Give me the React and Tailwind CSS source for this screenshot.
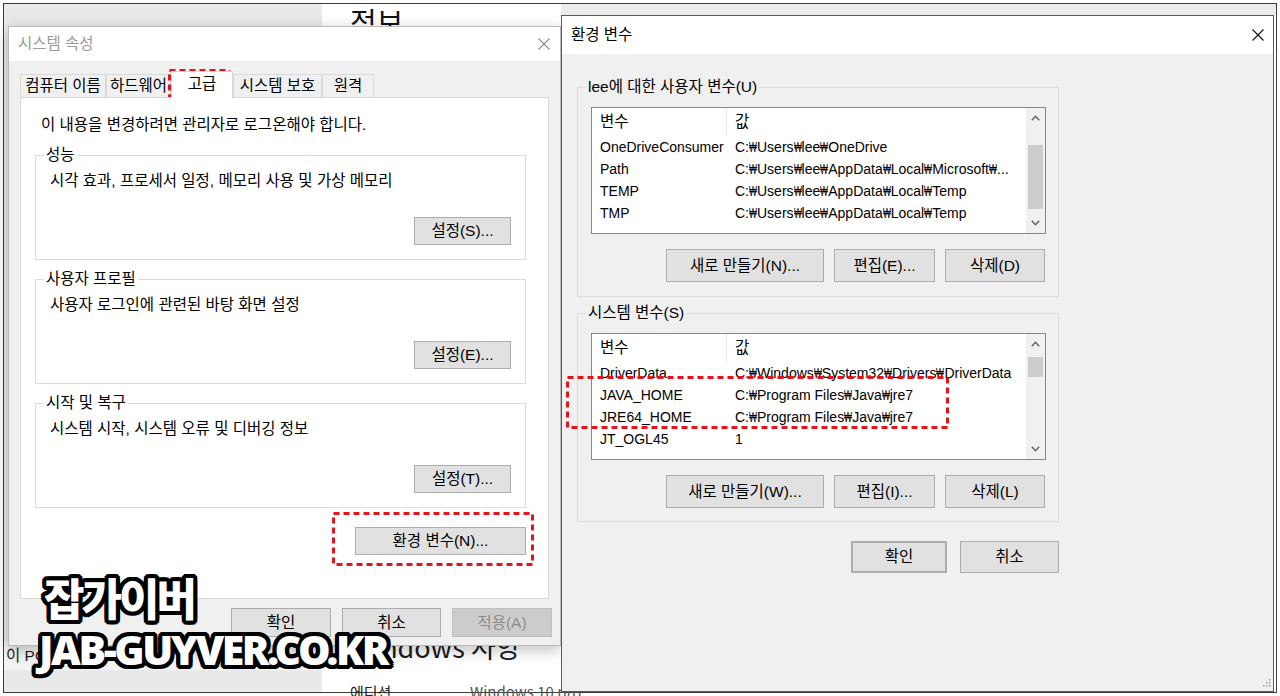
import React from "react";

const OUTLINE =
  "[text-shadow:4px_0_0_#000,-4px_0_0_#000,0_4px_0_#000,0_-4px_0_#000,3px_3px_0_#000,-3px_3px_0_#000,3px_-3px_0_#000,-3px_-3px_0_#000,4px_2px_0_#000,4px_-2px_0_#000,-4px_2px_0_#000,-4px_-2px_0_#000,2px_4px_0_#000,-2px_4px_0_#000,2px_-4px_0_#000,-2px_-4px_0_#000]";

function Btn({ children, className = "", disabled = false }) {
  return (
    <div
      className={
        "flex shrink-0 items-center justify-center border text-[15.5px] leading-none " +
        (disabled
          ? "border-[#bfbfbf] bg-[#cccccc] text-[#8c8c8c] "
          : "border-[#adadad] bg-[#e1e1e1] text-black ") +
        className
      }
    >
      {children}
    </div>
  );
}

function CloseX({ color }) {
  return (
    <svg width="12" height="12" viewBox="0 0 12 12" className="block">
      <path d="M0.5 0.5 L11.5 11.5 M11.5 0.5 L0.5 11.5" stroke={color} strokeWidth="1.1" fill="none" />
    </svg>
  );
}

function Chevron({ up }) {
  return (
    <svg width="9" height="6" viewBox="0 0 9 6" className="block">
      <path
        d={up ? "M0.8 5.2 L4.5 1.3 L8.2 5.2" : "M0.8 0.8 L4.5 4.7 L8.2 0.8"}
        stroke="#606060"
        strokeWidth="1.4"
        fill="none"
      />
    </svg>
  );
}

function Group({ label, className = "", labelBg, children }) {
  return (
    <div className={"relative flex flex-col border border-[#dcdcdc] " + className}>
      <span className={"absolute left-[8px] top-[-10px] px-[2px] text-[15.5px] leading-[18px] text-black " + labelBg}>
        {label}
      </span>
      {children}
    </div>
  );
}

function Val({ text }) {
  const parts = text.split("₩");
  return (
    <>
      {parts.map((p, i) => (
        <React.Fragment key={i}>
          {i > 0 && <span className="inline-block w-[8px] origin-left scale-x-[0.6]">₩</span>}
          {p}
        </React.Fragment>
      ))}
    </>
  );
}

function ListView({ rows, thumbClass }) {
  return (
    <div className="flex h-[127px] w-[455px] border border-[#828790] bg-white">
      <div className="min-w-0 flex-1 overflow-hidden text-black">
        <div className="flex h-[28px] text-[15.5px]">
          <div className="flex w-[135px] shrink-0 items-center border-r border-[#e5e5e5] pl-[8px]">변수</div>
          <div className="flex items-center pl-[8px]">값</div>
        </div>
        {rows.map(([n, v]) => (
          <div key={n} className="flex h-[22px] items-center whitespace-nowrap text-[14px]">
            <div className="w-[135px] shrink-0 pl-[8px]">{n}</div>
            <div className="pl-[8px]">
              <Val text={v} />
            </div>
          </div>
        ))}
      </div>
      <div className="flex w-[19px] shrink-0 flex-col bg-[#f0f0f0]">
        <div className="flex h-[20px] items-center justify-center">
          <Chevron up />
        </div>
        <div className="flex-1 px-[2px]">
          <div className={"bg-[#cdcdcd] " + thumbClass} />
        </div>
        <div className="flex h-[20px] items-center justify-center">
          <Chevron />
        </div>
      </div>
    </div>
  );
}

function DashBox({ className }) {
  return (
    <svg className={"pointer-events-none absolute " + className} preserveAspectRatio="none">
      <rect
        x="1.5"
        y="1.5"
        width="calc(100% - 3px)"
        height="calc(100% - 3px)"
        fill="none"
        stroke="#e3141b"
        strokeWidth="3"
        strokeDasharray="6 4"
      />
    </svg>
  );
}

export default function App() {
  const userRows = [
    ["OneDriveConsumer", "C:₩Users₩lee₩OneDrive"],
    ["Path", "C:₩Users₩lee₩AppData₩Local₩Microsoft₩..."],
    ["TEMP", "C:₩Users₩lee₩AppData₩Local₩Temp"],
    ["TMP", "C:₩Users₩lee₩AppData₩Local₩Temp"],
  ];
  const sysRows = [
    ["DriverData", "C:₩Windows₩System32₩Drivers₩DriverData"],
    ["JAVA_HOME", "C:₩Program Files₩Java₩jre7"],
    ["JRE64_HOME", "C:₩Program Files₩Java₩jre7"],
    ["JT_OGL45", "1"],
  ];
  const tabs = [
    ["컴퓨터 이름", "w-[86px]"],
    ["하드웨어", "w-[65px]"],
  ];
  const tabs2 = [
    ["시스템 보호", "w-[89px]"],
    ["원격", "w-[52px]"],
  ];

  return (
    <div className="relative h-[696px] w-[1280px] overflow-hidden bg-white text-black [font-family:'Liberation_Sans','Noto_Sans_CJK_KR',sans-serif]">
      {/* background: settings window inside outer frame */}
      <div className="ml-[3px] mt-[3px] flex h-[690px] w-[1274px] border border-[#3c3c3c]">
        <div className="flex w-[318px] shrink-0 flex-col bg-[#e9e9e9]">
          <div className="mt-[638px] flex h-[28px] items-center bg-[#f3f3f3] pl-[2px] text-[15.5px] text-[#222]">이 PC</div>
        </div>
        <div className="flex flex-1 flex-col pl-[28px] [font-family:'Noto_Sans_CJK_KR',sans-serif]">
          <div className="mt-[3px] text-[29px] leading-none text-[#111]">정보</div>
          <div className="mt-[597px] text-[27px] leading-none text-[#1a1a1a]">Windows 사양</div>
          <div className="mt-[24px] flex text-[15px] leading-none text-[#222]">
            <span className="w-[120px]">에디션</span>
            <span className="text-[#555]">Windows 10 pro</span>
          </div>
        </div>
      </div>

      {/* system properties dialog */}
      <div className="absolute left-[8px] top-[26px] flex h-[620px] w-[553px] flex-col border border-[#b9b9b9] bg-[#f0f0f0] shadow-[0_4px_14px_rgba(0,0,0,0.25)]">
        <div className="flex h-[34px] shrink-0 items-center justify-between bg-white pl-[9px] pr-[10px]">
          <span className="text-[15.5px] text-[#9a9a9a]">시스템 속성</span>
          <CloseX color="#8a8a8a" />
        </div>
        <div className="flex flex-1 flex-col px-[11px] pt-[10px]">
          <div className="flex h-[26px] items-end">
            {tabs.map(([t, w]) => (
              <div key={t} className={"flex h-[23px] items-center justify-center border border-b-0 border-[#d9d9d9] bg-[#f0f0f0] text-[15.5px] " + w}>
                {t}
              </div>
            ))}
            <div className="relative z-10 mb-[-1px] flex h-[27px] w-[62px] items-center justify-center border border-b-0 border-[#d9d9d9] bg-white pb-[2px] text-[15.5px]">
              고급
            </div>
            {tabs2.map(([t, w]) => (
              <div key={t} className={"flex h-[23px] items-center justify-center border border-b-0 border-[#d9d9d9] bg-[#f0f0f0] text-[15.5px] " + w}>
                {t}
              </div>
            ))}
          </div>
          <div className="flex h-[502px] flex-col border border-[#d9d9d9] bg-white">
            <div className="h-[57px] pl-[20px] pt-[18px] text-[15.5px] leading-[18px]">이 내용을 변경하려면 관리자로 로그온해야 합니다.</div>
            <Group label="성능" labelBg="bg-white" className="ml-[14px] mr-[22px] h-[105px]">
              <div className="pl-[14px] pt-[16px] text-[15.5px] leading-[18px]">시각 효과, 프로세서 일정, 메모리 사용 및 가상 메모리</div>
              <Btn className="mb-[14px] mr-[14px] mt-auto h-[28px] w-[97px] self-end">설정(S)...</Btn>
            </Group>
            <Group label="사용자 프로필" labelBg="bg-white" className="ml-[14px] mr-[22px] mt-[19px] h-[105px]">
              <div className="pl-[14px] pt-[16px] text-[15.5px] leading-[18px]">사용자 로그인에 관련된 바탕 화면 설정</div>
              <Btn className="mb-[14px] mr-[14px] mt-auto h-[28px] w-[97px] self-end">설정(E)...</Btn>
            </Group>
            <Group label="시작 및 복구" labelBg="bg-white" className="ml-[14px] mr-[22px] mt-[19px] h-[105px]">
              <div className="pl-[14px] pt-[16px] text-[15.5px] leading-[18px]">시스템 시작, 시스템 오류 및 디버깅 정보</div>
              <Btn className="mb-[14px] mr-[14px] mt-auto h-[28px] w-[97px] self-end">설정(T)...</Btn>
            </Group>
            <Btn className="mr-[22px] mt-[19px] h-[28px] w-[171px] self-end">환경 변수(N)...</Btn>
          </div>
          <div className="-mr-[3px] mt-[9px] flex justify-end gap-[11px]">
            <Btn className="h-[29px] w-[100px]">확인</Btn>
            <Btn className="h-[29px] w-[99px]">취소</Btn>
            <Btn disabled className="h-[29px] w-[100px]">적용(A)</Btn>
          </div>
        </div>
      </div>

      {/* band above env dialog */}
      <div className="absolute left-[561px] top-[4px] h-[11px] w-[715px] bg-[#ebebeb]" />

      {/* environment variables dialog */}
      <div className="absolute left-[561px] top-[15px] flex h-[677px] w-[713px] flex-col border border-[#5a5a5a] bg-[#f0f0f0]">
        <div className="flex h-[38px] shrink-0 items-center justify-between bg-white pl-[9px] pr-[9px]">
          <span className="text-[15.5px]">환경 변수</span>
          <CloseX color="#111" />
        </div>
        <div className="relative flex flex-1 flex-col pl-[15px] pt-[33px]">
          <Group label="lee에 대한 사용자 변수(U)" labelBg="bg-[#f0f0f0]" className="h-[210px] w-[482px] px-[13px] pt-[19px]">
            <ListView rows={userRows} thumbClass="mt-[17px] h-[64px]" />
            <div className="mt-[15px] flex justify-end gap-[10px]">
              <Btn className="h-[33px] w-[158px]">새로 만들기(N)...</Btn>
              <Btn className="h-[33px] w-[101px]">편집(E)...</Btn>
              <Btn className="h-[33px] w-[100px]">삭제(D)</Btn>
            </div>
          </Group>
          <Group label="시스템 변수(S)" labelBg="bg-[#f0f0f0]" className="mt-[16px] h-[209px] w-[482px] px-[13px] pt-[19px]">
            <ListView rows={sysRows} thumbClass="mt-[3px] h-[20px]" />
            <div className="mt-[15px] flex justify-end gap-[10px]">
              <Btn className="h-[33px] w-[158px]">새로 만들기(W)...</Btn>
              <Btn className="h-[33px] w-[101px]">편집(I)...</Btn>
              <Btn className="h-[33px] w-[100px]">삭제(L)</Btn>
            </div>
          </Group>
          <div className="mt-[19px] flex w-[482px] justify-end gap-[13px]">
            <Btn className="h-[32px] w-[96px] border-2 border-[#0078d7]">확인</Btn>
            <Btn className="h-[32px] w-[99px]">취소</Btn>
          </div>
          <svg width="10" height="10" viewBox="0 0 10 10" className="absolute bottom-[2px] right-[2px]">
            <g fill="#9a9a9a">
              <rect x="8" y="0" width="1.5" height="1.5" />
              <rect x="5" y="3" width="1.5" height="1.5" />
              <rect x="8" y="3" width="1.5" height="1.5" />
              <rect x="2" y="6" width="1.5" height="1.5" />
              <rect x="5" y="6" width="1.5" height="1.5" />
              <rect x="8" y="6" width="1.5" height="1.5" />
            </g>
          </svg>
        </div>
      </div>

      {/* annotations */}
      <DashBox className="left-[168px] top-[69px] h-[28px] w-[63px]" />
      <DashBox className="left-[332px] top-[512px] h-[54px] w-[202px]" />
      <DashBox className="left-[566px] top-[376px] h-[53px] w-[383px]" />

      {/* watermark */}
      <div className="absolute left-[44px] top-[577px] flex flex-col text-white [font-family:'Noto_Sans','Noto_Sans_CJK_KR',sans-serif]">
        <div className={"text-[44px] font-black leading-none tracking-[-3px] " + OUTLINE}>잡가이버</div>
        <div className={"mt-[8px] ml-[-5px] text-[41px] font-black leading-none tracking-[-2.4px] " + OUTLINE}>JAB-GUYVER.CO.KR</div>
      </div>
    </div>
  );
}
